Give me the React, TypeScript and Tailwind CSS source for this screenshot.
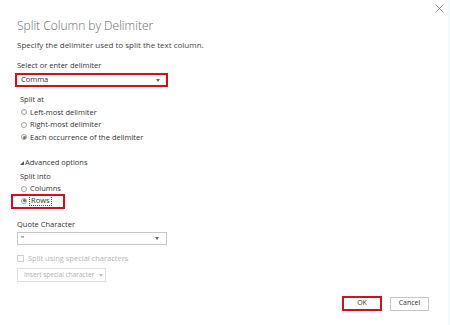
import React from 'react';

const font = { fontFamily: '"Open Sans", "Liberation Sans", sans-serif' };

const Caret = ({ color = '#666' }: { color?: string }) => (
  <svg width="4" height="3" viewBox="0 0 4 3">
    <path d="M0 0 L4 0 L2 3 Z" fill={color} />
  </svg>
);

const Radio = ({ checked, label, focus }: { checked?: boolean; label: string; focus?: boolean }) => (
  <div className="flex items-center h-[12.5px]">
    <span className="w-[6px] h-[6px] rounded-full border border-[#a0a0a0] flex items-center justify-center ml-[21px]">
      {checked && <span className="w-[3px] h-[3px] rounded-full bg-[#707070]" />}
    </span>
    <span
      className={
        focus
          ? 'ml-[2px] px-[1px] border border-dotted border-[#555] leading-[9px] text-[#333]'
          : 'ml-[3px] text-[#333]'
      }
    >
      {label}
    </span>
  </div>
);

export default function App() {
  return (
    <div
      className="relative w-[450px] h-[325px] bg-white border-r-2 border-[#f2fbfb] flex flex-col text-[7.5px] text-[#333] overflow-hidden"
      style={font}
    >
      {/* close */}
      <svg className="absolute left-[435px] top-[4px]" width="9" height="9" viewBox="0 0 9 9">
        <path d="M0.5 0.5 L8.5 8.5 M8.5 0.5 L0.5 8.5" stroke="#8a8a8a" strokeWidth="0.9" />
      </svg>

      <div className="pl-[17px] pt-[16px] flex flex-col">
        <div className="h-[20px] flex items-center text-[12px] font-light text-[#6a6a6a] leading-none">
          Split Column by Delimiter
        </div>
        <div className="mt-[3px] h-[12px] flex items-center text-[8px] text-[#444]">
          Specify the delimiter used to split the text column.
        </div>

        <div className="mt-[8.5px] h-[12px] flex items-center">Select or enter delimiter</div>
        <div className="mt-[1.5px] w-[153px] h-[14px] border-2 border-[#d01020] -ml-[2px] flex items-center justify-between pl-[4px] pr-[6px]">
          <span>Comma</span>
          <Caret />
        </div>

        <div className="mt-[6.5px] h-[12px] flex items-center pl-[3px]">Split at</div>
        <div className="-ml-[17px] flex flex-col mt-[0.5px]">
          <Radio label="Left-most delimiter" />
          <Radio label="Right-most delimiter" />
          <Radio checked label="Each occurrence of the delimiter" />
        </div>

        <div className="mt-[13px] h-[12px] flex items-center pl-[3px]">
          <svg width="4" height="4" viewBox="0 0 4 4" className="mr-[1px]">
            <path d="M4 0 L4 4 L0 4 Z" fill="#555" />
          </svg>
          Advanced options
        </div>
        <div className="mt-[2px] h-[12px] flex items-center pl-[3px]">Split into</div>
        <div className="-ml-[17px] flex flex-col">
          <Radio label="Columns" />
          <div className="relative mt-[-0.5px]">
            <Radio checked focus label="Rows" />
            <div className="absolute left-[11px] top-[-1px] w-[54px] h-[15.5px] border-2 border-[#d01020]" />
          </div>
        </div>

        <div className="mt-[12px] h-[12px] flex items-center">Quote Character</div>
        <div className="mt-[1px] w-[150px] h-[13px] border border-[#c6c6c6] flex items-center justify-between pl-[3px] pr-[7px]">
          <span>"</span>
          <Caret />
        </div>

        <div className="mt-[9px] h-[9px] flex items-center text-[#b5b5b5]">
          <span className="w-[7px] h-[7px] border border-[#cfcfcf] mr-[4px]" />
          Split using special characters
        </div>
        <div className="mt-[5px] w-[89px] h-[14px] border border-[#e0e0e0] flex items-center pl-[6px] text-[6.5px] text-[#b0b0b0] whitespace-nowrap">
          Insert special character
          <span className="ml-[5px]">
            <Caret color="#bbb" />
          </span>
        </div>
      </div>

      <div className="mt-auto mb-[14px] flex justify-end gap-[8px] pr-[19px]">
        <button className="w-[40px] h-[15px] border-2 border-[#d01020] flex items-center justify-center text-[7px] text-[#333]">
          OK
        </button>
        <button className="w-[39px] h-[14px] mt-[0.5px] border border-[#c6c6c6] flex items-center justify-center text-[7px] text-[#333]">
          Cancel
        </button>
      </div>
    </div>
  );
}
